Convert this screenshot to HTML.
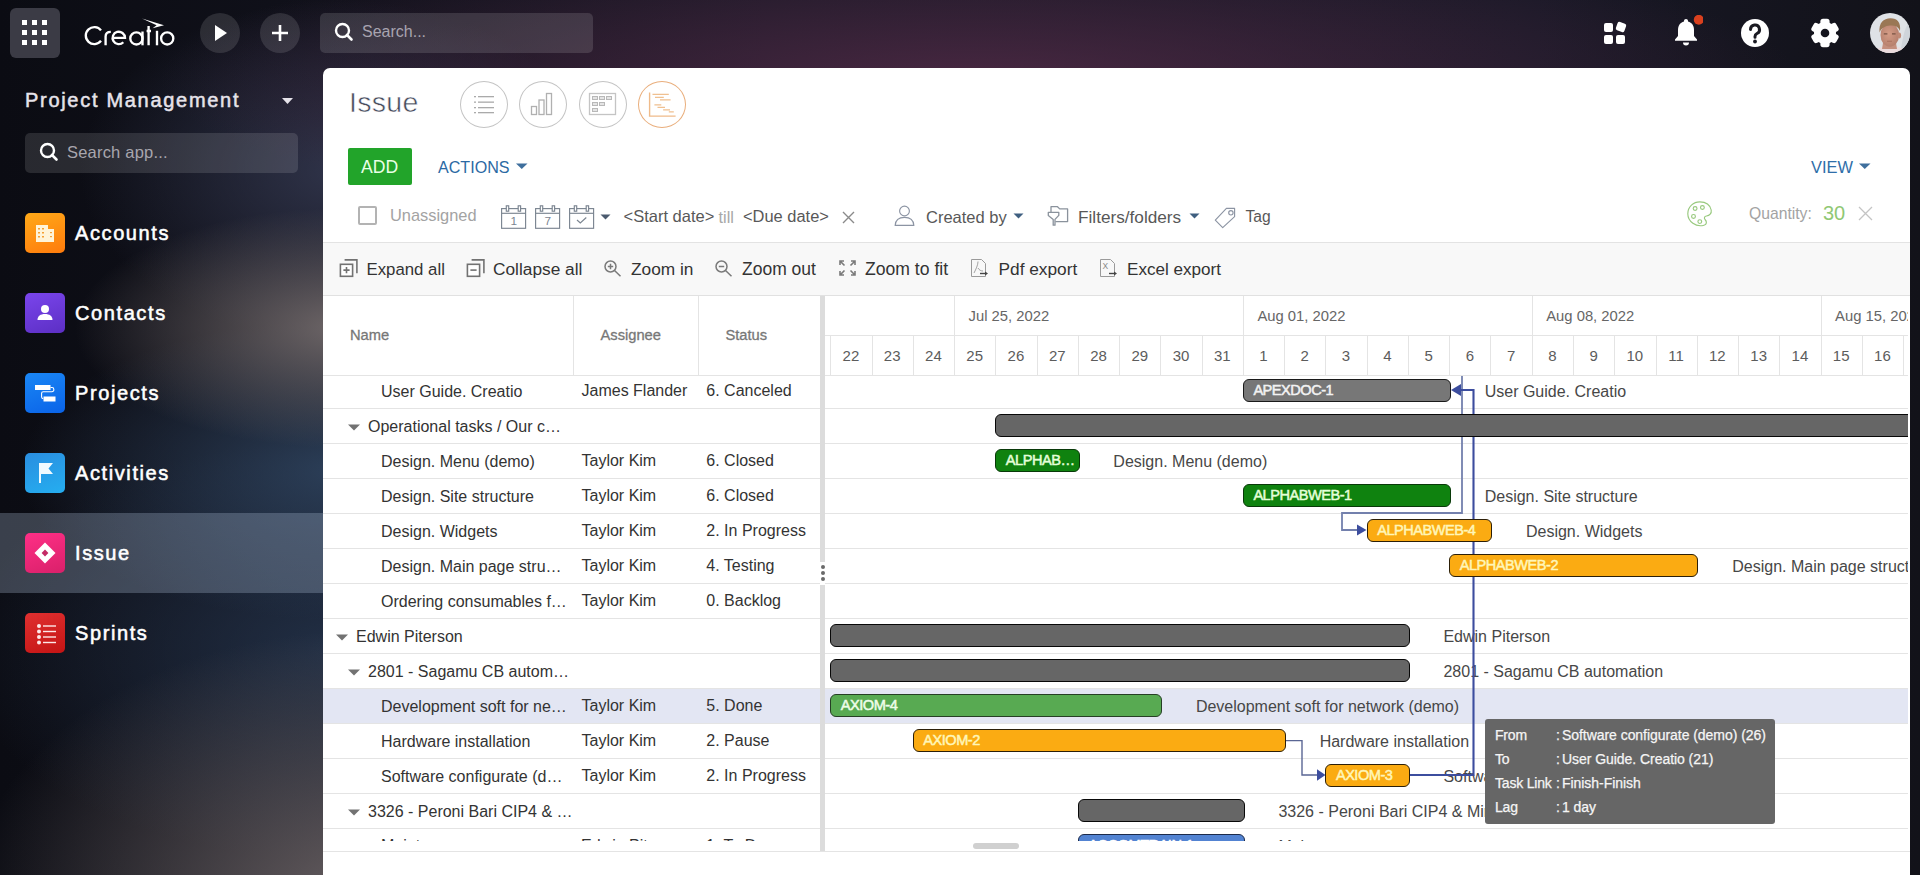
<!DOCTYPE html>
<html><head><meta charset="utf-8">
<style>
*{box-sizing:border-box;margin:0;padding:0}
html,body{width:1920px;height:875px;overflow:hidden}
body{position:relative;font-family:"Liberation Sans",sans-serif;color:#333;
background:
 radial-gradient(ellipse 270px 120px at 345px 328px, rgba(115,107,108,0.95), rgba(115,107,108,0) 100%),
 radial-gradient(ellipse 400px 270px at 370px 900px, rgba(108,100,102,0.95), rgba(108,100,102,0) 100%),
 radial-gradient(ellipse 820px 150px at 980px 80px, rgba(80,42,70,0.85), rgba(80,42,70,0) 100%),
 radial-gradient(ellipse 260px 170px at 340px 170px, rgba(55,60,85,0.8), rgba(55,60,85,0) 100%),
 radial-gradient(ellipse 320px 150px at 340px 470px, rgba(48,70,98,0.85), rgba(48,70,98,0) 100%),
 radial-gradient(ellipse 380px 210px at 340px 650px, rgba(38,55,80,0.8), rgba(38,55,80,0) 100%),
 linear-gradient(90deg,#0b0c13 0%,#171724 40%,#181826 80%,#121219 100%);
}
.abs{position:absolute}
.wt{color:#fff}
</style></head><body>

<!-- TOP BAR -->
<div class="abs" style="left:10px;top:8px;width:50px;height:50px;border-radius:6px;background:#3b3b45"></div>
<svg class="abs" style="left:22px;top:20px" width="26" height="26" viewBox="0 0 26 26" fill="#fff">
<rect x="0" y="0" width="5" height="5"/><rect x="10" y="0" width="5" height="5"/><rect x="20" y="0" width="5" height="5"/>
<rect x="0" y="10" width="5" height="5"/><rect x="10" y="10" width="5" height="5"/><rect x="20" y="10" width="5" height="5"/>
<rect x="0" y="20" width="5" height="5"/><rect x="10" y="20" width="5" height="5"/><rect x="20" y="20" width="5" height="5"/>
</svg>
<svg class="abs" style="left:80px;top:14px" width="100" height="38" viewBox="0 0 100 38"><g fill="none" stroke="#fff" stroke-width="2.35">
<path d="M21.00 16.37A8.5 8.5 0 1 0 21.00 26.83"/>
<path d="M25.6 31.3V22.5C25.6 19 27.4 17.9 30.8 17.9"/>
<path d="M32.5 23.9H45A6.2 6.2 0 1 0 43.3 28.2"/>
<circle cx="56.4" cy="24.4" r="6.1"/><path d="M62.5 17.5V31.3"/>
<path d="M68.6 12V31.3M66.6 17H71"/><path d="M77 16.8V31.3"/>
<circle cx="87.2" cy="24.4" r="6.1"/></g>
<path d="M62 4.6L84 11.3L72.6 14.2L76.6 11.2Z" fill="#fff"/></svg>

<div class="abs" style="left:200px;top:13px;width:40px;height:40px;border-radius:50%;background:rgba(255,255,255,0.12)"></div>
<svg class="abs" style="left:213px;top:24px" width="16" height="18"><path d="M2 1 L14 9 L2 17Z" fill="#fff"/></svg>
<div class="abs" style="left:260px;top:13px;width:40px;height:40px;border-radius:50%;background:rgba(255,255,255,0.12)"></div>
<svg class="abs" style="left:271px;top:24px" width="18" height="18"><path d="M9 1V17M1 9H17" stroke="#fff" stroke-width="2.6"/></svg>

<div class="abs" style="left:320px;top:13px;width:273px;height:40px;border-radius:5px;background:rgba(255,255,255,0.13)"></div>
<svg class="abs" style="left:334px;top:22px" width="20" height="20"><circle cx="8.5" cy="8.5" r="6.5" stroke="#fff" stroke-width="2.4" fill="none"/><path d="M13 13L17.5 17.5" stroke="#fff" stroke-width="2.6" stroke-linecap="round"/></svg>
<div class="abs" style="left:362px;top:22px;font-size:16px;color:#a8a4b0;line-height:20px">Search...</div>

<!-- right top icons -->
<svg class="abs" style="left:1603px;top:21px" width="26" height="26" fill="#fff">
<rect x="1" y="2" width="9" height="9" rx="2"/><rect x="1" y="14" width="9" height="9" rx="2"/><rect x="13" y="14" width="9" height="9" rx="2"/>
<rect x="13.5" y="1.5" width="9" height="9" rx="2" transform="rotate(20 18 6)"/>
</svg>
<svg class="abs" style="left:1671px;top:15px" width="32" height="34" fill="#fff">
<path d="M15 4c-1.2 0-2 .8-2 2v.6C9 7.6 7 11 7 15v6l-3 3.5v1.2h22v-1.2L23 21v-6c0-4-2-7.4-6-8.4V6c0-1.2-.8-2-2-2z"/>
<path d="M12 27.5h6a3 3 0 0 1-6 0z"/>
<circle cx="27.8" cy="4.8" r="5" fill="#d9401e"/>
</svg>
<svg class="abs" style="left:1740px;top:18px" width="30" height="30">
<circle cx="15" cy="15" r="14" fill="#fff"/>
<path d="M10.5 11.5a4.5 4.5 0 1 1 6.5 4c-1.4.8-2 1.5-2 3v.7" stroke="#1a1a22" stroke-width="3" fill="none" stroke-linecap="round"/>
<circle cx="15" cy="23.5" r="1.9" fill="#1a1a22"/>
</svg>
<svg class="abs" style="left:1808px;top:16px" width="34" height="34" viewBox="0 0 34 34"><g fill="#fff"><circle cx="17" cy="17" r="11"/><rect x="12.4" y="2.8000000000000007" width="9.2" height="8" rx="2.6" transform="rotate(0 17 17)"/><rect x="12.4" y="2.8000000000000007" width="9.2" height="8" rx="2.6" transform="rotate(60 17 17)"/><rect x="12.4" y="2.8000000000000007" width="9.2" height="8" rx="2.6" transform="rotate(120 17 17)"/><rect x="12.4" y="2.8000000000000007" width="9.2" height="8" rx="2.6" transform="rotate(180 17 17)"/><rect x="12.4" y="2.8000000000000007" width="9.2" height="8" rx="2.6" transform="rotate(240 17 17)"/><rect x="12.4" y="2.8000000000000007" width="9.2" height="8" rx="2.6" transform="rotate(300 17 17)"/></g><circle cx="17" cy="17" r="4.3" fill="#15151d"/></svg>
<svg class="abs" style="left:1870px;top:13px" width="40" height="40" viewBox="0 0 40 40"><defs><clipPath id="av"><circle cx="20" cy="20" r="20"/></clipPath><radialGradient id="fg" cx="0.45" cy="0.45" r="0.6"><stop offset="0" stop-color="#d49c86"/><stop offset="1" stop-color="#b47e6c"/></radialGradient></defs><g clip-path="url(#av)">
<rect width="40" height="40" fill="#dfe2e6"/><path d="M40 8C33 16 33 28 30 40H40Z" fill="#cfd4da"/>
<path d="M2 40C5 35 11 33.5 20 33.5S35 35 38 40Z" fill="#eadadc"/><path d="M13.5 27H25.5L27 36H12Z" fill="#c48f7e"/>
<ellipse cx="19.8" cy="22" rx="9.3" ry="11.8" fill="url(#fg)"/><ellipse cx="29.3" cy="22.5" rx="1.8" ry="3" fill="#c08a76"/>
<path d="M9.6 19.5C8.5 10 13.5 5.2 20.5 5.2S31 9.5 30 18C28.5 14 25 12.2 20 12.6C15 13 11.5 15 9.6 19.5Z" fill="#9a7755"/>
<path d="M13.8 20.8h3.6M22 20.8h3.6" stroke="#7a5446" stroke-width="1.3"/><path d="M17 28.2h5" stroke="#a9705f" stroke-width="1.1"/>
</g></svg>

<!-- SIDEBAR -->
<div class="abs" style="left:25px;top:88px;font-size:20px;font-weight:normal;color:#e6e3ea;letter-spacing:1.7px;line-height:24px;-webkit-text-stroke:0.5px #e6e3ea">Project Management</div>
<svg class="abs" style="left:282px;top:98px" width="12" height="8"><path d="M0 0H11L5.5 6Z" fill="#e6e3ea"/></svg>
<div class="abs" style="left:25px;top:133px;width:273px;height:40px;border-radius:5px;background:rgba(255,255,255,0.12)"></div>
<svg class="abs" style="left:39px;top:142px" width="20" height="20"><circle cx="8.5" cy="8.5" r="6.5" stroke="#fff" stroke-width="2.4" fill="none"/><path d="M13 13L17.5 17.5" stroke="#fff" stroke-width="2.6" stroke-linecap="round"/></svg>
<div class="abs" style="left:67px;top:142px;font-size:16.5px;color:#a8a6ae;line-height:20px;letter-spacing:0.2px">Search app...</div>

<div class="abs" style="left:0;top:513px;width:323px;height:80px;background:rgba(170,185,210,0.3)"></div>

<!-- menu -->
<div class="abs" style="left:25px;top:213px;width:40px;height:40px;border-radius:5px;background:linear-gradient(160deg,#ffa918,#ff7b0c)"></div>
<svg class="abs" style="left:25px;top:213px" width="40" height="40" fill="#fff4d8"><rect x="11" y="12" width="12" height="17"/><rect x="23" y="16" width="6" height="13"/>
<g fill="#f5a033"><rect x="13" y="15" width="2" height="1.5"/><rect x="17" y="15" width="2" height="1.5"/><rect x="13" y="19" width="2" height="1.5"/><rect x="17" y="19" width="2" height="1.5"/><rect x="13" y="23" width="2" height="1.5"/><rect x="17" y="23" width="2" height="1.5"/><rect x="25" y="19" width="2" height="1.2"/><rect x="25" y="23" width="2" height="1.2"/></g></svg>
<div class="abs wt" style="left:75px;top:223px;font-size:20px;font-weight:normal;line-height:20px;letter-spacing:1.6px;-webkit-text-stroke:0.55px #fff">Accounts</div>

<div class="abs" style="left:25px;top:293px;width:40px;height:40px;border-radius:5px;background:linear-gradient(160deg,#7a45ec,#5c2fc4)"></div>
<svg class="abs" style="left:25px;top:293px" width="40" height="40" fill="#fff"><circle cx="20" cy="16" r="4"/><path d="M12.5 27c0-4 3-6 7.5-6s7.5 2 7.5 6z"/></svg>
<div class="abs wt" style="left:75px;top:303px;font-size:20px;font-weight:normal;line-height:20px;letter-spacing:1.6px;-webkit-text-stroke:0.55px #fff">Contacts</div>

<div class="abs" style="left:25px;top:373px;width:40px;height:40px;border-radius:5px;background:linear-gradient(160deg,#1a87f5,#0a63e8)"></div>
<svg class="abs" style="left:25px;top:373px" width="40" height="40"><rect x="10" y="12" width="15.5" height="5" fill="#fff"/><rect x="18.5" y="23.5" width="12" height="5" fill="#fff"/><path d="M25.5 14.5h1.5a1.8 1.8 0 0 1 1.8 1.8v0.6a1.8 1.8 0 0 1 -1.8 1.8h-8.8a1.6 1.6 0 0 0 -1.6 1.6v3.7a1.6 1.6 0 0 0 1.6 1.6" stroke="#fff" stroke-width="1.1" fill="none"/></svg>
<div class="abs wt" style="left:75px;top:383px;font-size:20px;font-weight:normal;line-height:20px;letter-spacing:1.6px;-webkit-text-stroke:0.55px #fff">Projects</div>

<div class="abs" style="left:25px;top:453px;width:40px;height:40px;border-radius:5px;background:linear-gradient(160deg,#2a8ee0,#25aef0)"></div>
<svg class="abs" style="left:25px;top:453px" width="40" height="40"><path d="M14 10h14l-4.5 5.5L28 21H16v9h-2z" fill="#f0faff"/></svg>
<div class="abs wt" style="left:75px;top:463px;font-size:20px;font-weight:normal;line-height:20px;letter-spacing:1.6px;-webkit-text-stroke:0.55px #fff">Activities</div>

<div class="abs" style="left:25px;top:533px;width:40px;height:40px;border-radius:5px;background:linear-gradient(160deg,#ff2f86,#d9206a)"></div>
<svg class="abs" style="left:25px;top:533px" width="40" height="40"><path d="M20 9.5L30.5 20L20 30.5L9.5 20Z" fill="#fff"/><rect x="17.6" y="17.6" width="4.8" height="4.8" fill="#c42a66" transform="rotate(45 20 20)"/></svg>
<div class="abs wt" style="left:75px;top:543px;font-size:20px;font-weight:normal;line-height:20px;letter-spacing:1.6px;-webkit-text-stroke:0.55px #fff">Issue</div>

<div class="abs" style="left:25px;top:613px;width:40px;height:40px;border-radius:5px;background:linear-gradient(160deg,#e03030,#c41414)"></div>
<svg class="abs" style="left:25px;top:613px" width="40" height="40" fill="#fde8e8"><circle cx="14" cy="13" r="2"/><circle cx="14" cy="18.5" r="2"/><circle cx="14" cy="24" r="2"/><circle cx="14" cy="29.5" r="2"/>
<rect x="18" y="12.3" width="13" height="1.4"/><rect x="18" y="17.8" width="13" height="1.4"/><rect x="18" y="23.3" width="13" height="1.4"/><rect x="18" y="28.8" width="13" height="1.4"/></svg>
<div class="abs wt" style="left:75px;top:623px;font-size:20px;font-weight:normal;line-height:20px;letter-spacing:1.6px;-webkit-text-stroke:0.55px #fff">Sprints</div>


<div class="abs" style="left:323px;top:68px;width:1587px;height:807px;background:#fff;border-radius:7px 7px 0 0"></div>
<div class="abs" style="left:349px;top:84.12px;font-size:28.5px;line-height:36px;color:#464b5c;font-weight:normal;white-space:nowrap;letter-spacing:0.3px;-webkit-text-stroke:0.55px #fff">Issue</div>
<div class="abs" style="left:460px;top:81px;width:48px;height:47px;border:1px solid #c4c4c4;border-radius:50%"></div>
<div class="abs" style="left:519px;top:81px;width:48px;height:47px;border:1px solid #c4c4c4;border-radius:50%"></div>
<div class="abs" style="left:579px;top:81px;width:48px;height:47px;border:1px solid #c4c4c4;border-radius:50%"></div>
<div class="abs" style="left:638px;top:81px;width:48px;height:47px;border:1px solid #e9ae7c;border-radius:50%"></div>
<svg class="abs" style="left:472px;top:94px;" width="26" height="20" viewBox="0 0 26 20"><g fill="#aaa"><rect x="2" y="2" width="2" height="1.3"/><rect x="6" y="2" width="16" height="1.3"/><rect x="2" y="7.5" width="2" height="1.3"/><rect x="6" y="7.5" width="16" height="1.3"/><rect x="2" y="13" width="2" height="1.3"/><rect x="6" y="13" width="16" height="1.3"/><rect x="2" y="18" width="2" height="1.3"/><rect x="6" y="18" width="16" height="1.3"/></g></svg>
<svg class="abs" style="left:529px;top:91px;" width="28" height="26" viewBox="0 0 28 26"><g fill="none" stroke="#b0b0b0" stroke-width="1.3"><rect x="2.5" y="15.5" width="5" height="8"/><rect x="10" y="9" width="5" height="14.5"/><rect x="17.5" y="2.5" width="5" height="21"/></g></svg>
<svg class="abs" style="left:588px;top:92px;" width="30" height="26" viewBox="0 0 30 26"><g fill="none" stroke="#c4c4c4" stroke-width="1.3"><rect x="1.5" y="1.5" width="26" height="21"/></g><g fill="#e4e4e4" stroke="#b8b8b8" stroke-width="1"><rect x="4.5" y="4.5" width="5" height="3"/><rect x="11.5" y="4.5" width="5" height="3"/><rect x="18.5" y="4.5" width="5" height="3"/><rect x="4.5" y="10.5" width="5" height="3"/><rect x="11.5" y="10.5" width="5" height="3"/><rect x="4.5" y="16.5" width="5" height="3"/></g></svg>
<svg class="abs" style="left:647px;top:91px;" width="30" height="27" viewBox="0 0 30 27"><g fill="none" stroke="#efbb8a" stroke-width="1.4"><path d="M2.6 1.4V25.1H28.6"/></g><g stroke="#f0c090" stroke-width="1.3"><path d="M5.5 3.3H21.8M8 6.4H16.8M13 8.9H23.6M7.4 13.9H14.3M10.5 16.4H18M16.1 18.9H23M21.8 20.8H26.8"/></g></svg>
<div class="abs" style="left:348px;top:148px;width:64px;height:37px;background:#22a42a;border-radius:2px"></div>
<div class="abs" style="left:361px;top:155.70px;font-size:17.6px;line-height:22px;color:#e9ffe6;font-weight:normal;white-space:nowrap;">ADD</div>
<div class="abs" style="left:438px;top:156.92px;font-size:16.1px;line-height:20px;color:#2b69a3;font-weight:normal;white-space:nowrap;">ACTIONS</div>
<svg class="abs" style="left:515px;top:163px;" width="14" height="7" viewBox="0 0 14 7"><path d="M1 0.5H12.5L6.75 6Z" fill="#3f6f9d"/></svg>
<div class="abs" style="left:1811px;top:157.31px;font-size:16.4px;line-height:20px;color:#2f6ea9;font-weight:normal;white-space:nowrap;">VIEW</div>
<svg class="abs" style="left:1858px;top:163px;" width="14" height="7" viewBox="0 0 14 7"><path d="M1 0.5H12.5L6.75 6Z" fill="#3f6f9d"/></svg>
<div class="abs" style="left:358px;top:206px;width:19px;height:19px;border:2px solid #b3b3b3;border-radius:2px"></div>
<div class="abs" style="left:390px;top:204.81px;font-size:16.4px;line-height:20px;color:#a3a3a3;font-weight:normal;white-space:nowrap;">Unassigned</div>
<svg class="abs" style="left:501px;top:205px;" width="26" height="25" viewBox="0 0 26 25"><g fill="none" stroke="#7b8591" stroke-width="1.15"><rect x="0.6" y="3.6" width="24" height="19.7"/><path d="M0.6 8.3H24.6"/><rect x="5.3" y="0.8" width="2.4" height="5.4" fill="#fff"/><rect x="17.2" y="0.8" width="2.4" height="5.4" fill="#fff"/></g><text x="12.8" y="20" font-size="11.8" text-anchor="middle" fill="#7b8591" font-family="Liberation Sans">1</text></svg>
<svg class="abs" style="left:535px;top:205px;" width="26" height="25" viewBox="0 0 26 25"><g fill="none" stroke="#7b8591" stroke-width="1.15"><rect x="0.6" y="3.6" width="24" height="19.7"/><path d="M0.6 8.3H24.6"/><rect x="5.3" y="0.8" width="2.4" height="5.4" fill="#fff"/><rect x="17.2" y="0.8" width="2.4" height="5.4" fill="#fff"/></g><text x="12.8" y="20" font-size="11.8" text-anchor="middle" fill="#7b8591" font-family="Liberation Sans">7</text></svg>
<svg class="abs" style="left:569px;top:205px;" width="26" height="25" viewBox="0 0 26 25"><g fill="none" stroke="#7b8591" stroke-width="1.15"><rect x="0.6" y="3.6" width="24" height="19.7"/><path d="M0.6 8.3H24.6"/><rect x="5.3" y="0.8" width="2.4" height="5.4" fill="#fff"/><rect x="17.2" y="0.8" width="2.4" height="5.4" fill="#fff"/></g><path d="M8 15L11.3 18L17.3 12.5" stroke="#7b8591" stroke-width="1.15" fill="none"/></svg>
<svg class="abs" style="left:600px;top:214px;" width="11" height="7" viewBox="0 0 11 7"><path d="M0.5 0.5H10.5L5.5 5.5Z" fill="#4b5a6e"/></svg>
<div class="abs" style="left:623.5px;top:206.08px;font-size:16.5px;line-height:21px;color:#585858;font-weight:normal;white-space:nowrap;">&lt;Start date&gt;</div>
<div class="abs" style="left:718.5px;top:206.65px;font-size:16.3px;line-height:20px;color:#a8a8a8;font-weight:normal;white-space:nowrap;">till</div>
<div class="abs" style="left:743px;top:206.10px;font-size:16.45px;line-height:21px;color:#585858;font-weight:normal;white-space:nowrap;">&lt;Due date&gt;</div>
<svg class="abs" style="left:842px;top:211px;" width="13" height="13" viewBox="0 0 13 13"><path d="M1 1L12 12M12 1L1 12" stroke="#8a8a8a" stroke-width="1.4"/></svg>
<svg class="abs" style="left:894px;top:205px;" width="22" height="22" viewBox="0 0 22 22"><g fill="none" stroke="#8c94a3" stroke-width="1.15"><circle cx="10.5" cy="6" r="4.9"/><path d="M1.2 20.3C1.5 15 5 12.3 10.5 12.3S19.5 15 19.8 20.3Z"/></g></svg>
<div class="abs" style="left:926px;top:206.58px;font-size:16.5px;line-height:21px;color:#585858;font-weight:normal;white-space:nowrap;">Created by</div>
<svg class="abs" style="left:1013px;top:213px;" width="11" height="6" viewBox="0 0 11 6"><path d="M0.5 0.5H10.5L5.5 5.5Z" fill="#3f5f80"/></svg>
<svg class="abs" style="left:1047px;top:206px;" width="23" height="22" viewBox="0 0 23 22"><g fill="none" stroke="#8a929c" stroke-width="1.3" stroke-linejoin="round"><path d="M4 6V0.7H10.5L12.7 2.9H20.6V15.6H8.4"/><path d="M1.3 6.3H11.8V9.4L8 13.4V19.2H6.2V13.4L1.3 9.4Z"/></g></svg>
<div class="abs" style="left:1078px;top:205.84px;font-size:17.2px;line-height:22px;color:#585858;font-weight:normal;white-space:nowrap;">Filters/folders</div>
<svg class="abs" style="left:1189px;top:213px;" width="11" height="6" viewBox="0 0 11 6"><path d="M0.5 0.5H10.5L5.5 5.5Z" fill="#3f5f80"/></svg>
<svg class="abs" style="left:1214px;top:206px;" width="23" height="23" viewBox="0 0 23 23"><g fill="none" stroke="#8c94a3" stroke-width="1.15" stroke-linejoin="round"><path d="M12.4 2.4H20.6V10.6L8.7 21.6L1.3 14.2Z"/><circle cx="16.9" cy="6.8" r="2.2"/></g></svg>
<div class="abs" style="left:1245.5px;top:207.39px;font-size:15.6px;line-height:20px;color:#585858;font-weight:normal;white-space:nowrap;">Tag</div>
<svg class="abs" style="left:1686px;top:200px;" width="28" height="28" viewBox="0 0 28 28"><g fill="none" stroke="#98c97e" stroke-width="1.15"><path d="M18 25.2C10 27.5 1.8 21.5 1.8 13.7C1.8 6.5 7.5 1.8 13.8 1.8C19.5 1.8 24 4.5 25.2 10C25.8 13.5 23.5 15.8 20.5 16C18.5 16.2 17.8 18 19 19.5C21 21.5 21 24.5 18 25.2Z"/><circle cx="9.1" cy="8.5" r="1.9"/><circle cx="16.4" cy="7.5" r="1.9"/><circle cx="7.5" cy="16.4" r="1.9"/><circle cx="13.8" cy="21.6" r="1.9"/></g></svg>
<div class="abs" style="left:1749px;top:203.76px;font-size:15.7px;line-height:20px;color:#a3a3a3;font-weight:normal;white-space:nowrap;">Quantity:</div>
<div class="abs" style="left:1823px;top:200.77px;font-size:20px;line-height:25px;color:#90c874;font-weight:normal;white-space:nowrap;">30</div>
<svg class="abs" style="left:1858px;top:206px;" width="15" height="15" viewBox="0 0 15 15"><path d="M1 1L14 14M14 1L1 14" stroke="#c4c4c4" stroke-width="1.3"/></svg>
<div class="abs" style="left:323px;top:242px;width:1587px;height:1px;background:#e3e3e3"></div>
<div class="abs" style="left:323px;top:243px;width:1587px;height:52px;background:#f8f8f8"></div>
<div class="abs" style="left:323px;top:295px;width:1587px;height:1px;background:#e1e1e1"></div>
<svg class="abs" style="left:339px;top:259px;" width="20" height="19" viewBox="0 0 20 19"><g fill="none" stroke="#727272" stroke-width="1.6"><path d="M5.6 0.9H17.9V14.3"/><rect x="1.4" y="5.3" width="12.2" height="12" fill="#fff"/><path d="M7.5 8V14.2M4.4 11.1H10.6"/></g></svg>
<div class="abs" style="left:366.5px;top:258.68px;font-size:16.8px;line-height:21px;color:#333;font-weight:normal;white-space:nowrap;">Expand all</div>
<svg class="abs" style="left:466px;top:259px;" width="20" height="19" viewBox="0 0 20 19"><g fill="none" stroke="#727272" stroke-width="1.6"><path d="M5.6 0.9H17.9V14.3"/><rect x="1.4" y="5.3" width="12.2" height="12" fill="#fff"/><path d="M4.4 11.1H10.6"/></g></svg>
<div class="abs" style="left:493px;top:258.00px;font-size:17.3px;line-height:22px;color:#333;font-weight:normal;white-space:nowrap;">Collapse all</div>
<svg class="abs" style="left:604px;top:260px;" width="18" height="17" viewBox="0 0 18 17"><g fill="none" stroke="#7a7a7a" stroke-width="1.5"><circle cx="6.5" cy="6.5" r="5.5"/><path d="M10.5 10.5L16.5 16.3M6.5 3.8V9.2M3.8 6.5H9.2"/></g></svg>
<div class="abs" style="left:631px;top:258.00px;font-size:17.3px;line-height:22px;color:#333;font-weight:normal;white-space:nowrap;">Zoom in</div>
<svg class="abs" style="left:715px;top:260px;" width="18" height="17" viewBox="0 0 18 17"><g fill="none" stroke="#7a7a7a" stroke-width="1.5"><circle cx="6.5" cy="6.5" r="5.5"/><path d="M10.5 10.5L16.5 16.3M3.8 6.5H9.2"/></g></svg>
<div class="abs" style="left:742px;top:257.93px;font-size:17.5px;line-height:22px;color:#333;font-weight:normal;white-space:nowrap;">Zoom out</div>
<svg class="abs" style="left:839px;top:260px;" width="17" height="16" viewBox="0 0 17 16"><g fill="none" stroke="#7a7a7a" stroke-width="1.6"><path d="M1 5V1H5M1 1L5.5 5.5M16 5V1H12M16 1L11.5 5.5M1 11V15H5M1 15L5.5 10.5M16 11V15H12M16 15L11.5 10.5"/></g></svg>
<div class="abs" style="left:865px;top:257.90px;font-size:17.6px;line-height:22px;color:#333;font-weight:normal;white-space:nowrap;">Zoom to fit</div>
<svg class="abs" style="left:971px;top:259px;" width="18" height="19" viewBox="0 0 18 19"><g fill="none" stroke="#9a9a9a" stroke-width="1"><path d="M0.5 0.5H10.5L14.5 4.5V17.5H0.5Z"/></g><path d="M3 14C5 10 7 6 7 2.5M7 9C8 11 10 12 12 12" stroke="#9a9a9a" stroke-width="0.9" fill="none"/><path d="M9 14.5H15.5" stroke="#444" stroke-width="1.4"/><path d="M14 12.5L17 14.5L14 16.5Z" fill="#444"/></svg>
<div class="abs" style="left:998.5px;top:258.00px;font-size:17.3px;line-height:22px;color:#333;font-weight:normal;white-space:nowrap;">Pdf export</div>
<svg class="abs" style="left:1100px;top:259px;" width="18" height="19" viewBox="0 0 18 19"><g fill="none" stroke="#9a9a9a" stroke-width="1"><path d="M0.5 0.5H10.5L14.5 4.5V17.5H0.5Z"/></g><text x="2.5" y="10" font-size="8.5" fill="#888" font-family="Liberation Sans">X</text><path d="M9 14.5H15.5" stroke="#444" stroke-width="1.4"/><path d="M14 12.5L17 14.5L14 16.5Z" fill="#444"/></svg>
<div class="abs" style="left:1127px;top:258.57px;font-size:17.1px;line-height:21px;color:#333;font-weight:normal;white-space:nowrap;">Excel export</div>
<div class="abs" style="left:573px;top:296px;width:1px;height:79px;background:#e4e4e4"></div>
<div class="abs" style="left:698px;top:296px;width:1px;height:79px;background:#e4e4e4"></div>
<div class="abs" style="left:350px;top:326.10px;font-size:14.7px;line-height:18px;color:#777;font-weight:normal;white-space:nowrap;-webkit-text-stroke:0.3px #777">Name</div>
<div class="abs" style="left:600.5px;top:326.10px;font-size:14.7px;line-height:18px;color:#777;font-weight:normal;white-space:nowrap;-webkit-text-stroke:0.3px #777">Assignee</div>
<div class="abs" style="left:725.4px;top:326.10px;font-size:14.7px;line-height:18px;color:#777;font-weight:normal;white-space:nowrap;-webkit-text-stroke:0.3px #777">Status</div>
<div class="abs" style="left:323px;top:375px;width:497px;height:1px;background:#e4e4e4"></div>
<div class="abs" style="left:323px;top:688px;width:497px;height:35px;background:#e3e6f3"></div>
<div class="abs" style="left:825px;top:688px;width:1083px;height:35px;background:#e3e6f3"></div>
<div class="abs" style="left:381px;top:381.95px;font-size:16px;line-height:20px;color:#333;font-weight:normal;white-space:nowrap;">User Guide. Creatio</div>
<div class="abs" style="left:581.5px;top:380.65px;font-size:16px;line-height:20px;color:#333;font-weight:normal;white-space:nowrap;">James Flander</div>
<div class="abs" style="left:706.3px;top:380.65px;font-size:16px;line-height:20px;color:#333;font-weight:normal;white-space:nowrap;">6. Canceled</div>
<div class="abs" style="left:368px;top:416.95px;font-size:16px;line-height:20px;color:#333;font-weight:normal;white-space:nowrap;">Operational tasks / Our c…</div>
<svg class="abs" style="left:348px;top:423.5px;" width="13" height="7" viewBox="0 0 13 7"><path d="M0 0.5H12L6 6.5Z" fill="#727272"/></svg>
<div class="abs" style="left:381px;top:451.95px;font-size:16px;line-height:20px;color:#333;font-weight:normal;white-space:nowrap;">Design. Menu (demo)</div>
<div class="abs" style="left:581.5px;top:450.65px;font-size:16px;line-height:20px;color:#333;font-weight:normal;white-space:nowrap;">Taylor Kim</div>
<div class="abs" style="left:706.3px;top:450.65px;font-size:16px;line-height:20px;color:#333;font-weight:normal;white-space:nowrap;">6. Closed</div>
<div class="abs" style="left:381px;top:486.95px;font-size:16px;line-height:20px;color:#333;font-weight:normal;white-space:nowrap;">Design. Site structure</div>
<div class="abs" style="left:581.5px;top:485.65px;font-size:16px;line-height:20px;color:#333;font-weight:normal;white-space:nowrap;">Taylor Kim</div>
<div class="abs" style="left:706.3px;top:485.65px;font-size:16px;line-height:20px;color:#333;font-weight:normal;white-space:nowrap;">6. Closed</div>
<div class="abs" style="left:381px;top:521.95px;font-size:16px;line-height:20px;color:#333;font-weight:normal;white-space:nowrap;">Design. Widgets</div>
<div class="abs" style="left:581.5px;top:520.65px;font-size:16px;line-height:20px;color:#333;font-weight:normal;white-space:nowrap;">Taylor Kim</div>
<div class="abs" style="left:706.3px;top:520.65px;font-size:16px;line-height:20px;color:#333;font-weight:normal;white-space:nowrap;">2. In Progress</div>
<div class="abs" style="left:381px;top:556.95px;font-size:16px;line-height:20px;color:#333;font-weight:normal;white-space:nowrap;">Design. Main page stru…</div>
<div class="abs" style="left:581.5px;top:555.65px;font-size:16px;line-height:20px;color:#333;font-weight:normal;white-space:nowrap;">Taylor Kim</div>
<div class="abs" style="left:706.3px;top:555.65px;font-size:16px;line-height:20px;color:#333;font-weight:normal;white-space:nowrap;">4. Testing</div>
<div class="abs" style="left:381px;top:591.95px;font-size:16px;line-height:20px;color:#333;font-weight:normal;white-space:nowrap;">Ordering consumables f…</div>
<div class="abs" style="left:581.5px;top:590.65px;font-size:16px;line-height:20px;color:#333;font-weight:normal;white-space:nowrap;">Taylor Kim</div>
<div class="abs" style="left:706.3px;top:590.65px;font-size:16px;line-height:20px;color:#333;font-weight:normal;white-space:nowrap;">0. Backlog</div>
<div class="abs" style="left:356px;top:626.95px;font-size:16px;line-height:20px;color:#333;font-weight:normal;white-space:nowrap;">Edwin Piterson</div>
<svg class="abs" style="left:336px;top:633.5px;" width="13" height="7" viewBox="0 0 13 7"><path d="M0 0.5H12L6 6.5Z" fill="#727272"/></svg>
<div class="abs" style="left:368px;top:661.95px;font-size:16px;line-height:20px;color:#333;font-weight:normal;white-space:nowrap;">2801 - Sagamu CB autom…</div>
<svg class="abs" style="left:348px;top:668.5px;" width="13" height="7" viewBox="0 0 13 7"><path d="M0 0.5H12L6 6.5Z" fill="#727272"/></svg>
<div class="abs" style="left:381px;top:696.95px;font-size:16px;line-height:20px;color:#333;font-weight:normal;white-space:nowrap;">Development soft for ne…</div>
<div class="abs" style="left:581.5px;top:695.65px;font-size:16px;line-height:20px;color:#333;font-weight:normal;white-space:nowrap;">Taylor Kim</div>
<div class="abs" style="left:706.3px;top:695.65px;font-size:16px;line-height:20px;color:#333;font-weight:normal;white-space:nowrap;">5. Done</div>
<div class="abs" style="left:381px;top:731.95px;font-size:16px;line-height:20px;color:#333;font-weight:normal;white-space:nowrap;">Hardware installation</div>
<div class="abs" style="left:581.5px;top:730.65px;font-size:16px;line-height:20px;color:#333;font-weight:normal;white-space:nowrap;">Taylor Kim</div>
<div class="abs" style="left:706.3px;top:730.65px;font-size:16px;line-height:20px;color:#333;font-weight:normal;white-space:nowrap;">2. Pause</div>
<div class="abs" style="left:381px;top:766.95px;font-size:16px;line-height:20px;color:#333;font-weight:normal;white-space:nowrap;">Software configurate (d…</div>
<div class="abs" style="left:581.5px;top:765.65px;font-size:16px;line-height:20px;color:#333;font-weight:normal;white-space:nowrap;">Taylor Kim</div>
<div class="abs" style="left:706.3px;top:765.65px;font-size:16px;line-height:20px;color:#333;font-weight:normal;white-space:nowrap;">2. In Progress</div>
<div class="abs" style="left:368px;top:801.95px;font-size:16px;line-height:20px;color:#333;font-weight:normal;white-space:nowrap;">3326 - Peroni Bari CIP4 &amp; …</div>
<svg class="abs" style="left:348px;top:808.5px;" width="13" height="7" viewBox="0 0 13 7"><path d="M0 0.5H12L6 6.5Z" fill="#727272"/></svg>
<div class="abs" style="left:323px;top:828px;width:497px;height:13px;overflow:hidden">
<div class="abs" style="left:58px;top:7.85px;font-size:16px;line-height:20px;color:#333;white-space:nowrap">Maintenance</div>
<div class="abs" style="left:258px;top:7.85px;font-size:16px;line-height:20px;color:#333;white-space:nowrap">Edwin Piterson</div>
<div class="abs" style="left:383px;top:7.85px;font-size:16px;line-height:20px;color:#333;white-space:nowrap">1. To Do</div>
</div>
<div class="abs" style="left:323px;top:408px;width:497px;height:1px;background:#e4e4e4"></div>
<div class="abs" style="left:323px;top:443px;width:497px;height:1px;background:#e4e4e4"></div>
<div class="abs" style="left:323px;top:478px;width:497px;height:1px;background:#e4e4e4"></div>
<div class="abs" style="left:323px;top:513px;width:497px;height:1px;background:#e4e4e4"></div>
<div class="abs" style="left:323px;top:548px;width:497px;height:1px;background:#e4e4e4"></div>
<div class="abs" style="left:323px;top:583px;width:497px;height:1px;background:#e4e4e4"></div>
<div class="abs" style="left:323px;top:618px;width:497px;height:1px;background:#e4e4e4"></div>
<div class="abs" style="left:323px;top:653px;width:497px;height:1px;background:#e4e4e4"></div>
<div class="abs" style="left:323px;top:688px;width:497px;height:1px;background:#e4e4e4"></div>
<div class="abs" style="left:323px;top:723px;width:497px;height:1px;background:#e4e4e4"></div>
<div class="abs" style="left:323px;top:758px;width:497px;height:1px;background:#e4e4e4"></div>
<div class="abs" style="left:323px;top:793px;width:497px;height:1px;background:#e4e4e4"></div>
<div class="abs" style="left:323px;top:828px;width:497px;height:1px;background:#e4e4e4"></div>
<div class="abs" style="left:323px;top:851px;width:1587px;height:1px;background:#e4e4e4"></div>
<div class="abs" style="left:820px;top:296px;width:5px;height:266px;background:#dcdcdc"></div>
<div class="abs" style="left:820px;top:585px;width:5px;height:266px;background:#dcdcdc"></div>
<div class="abs" style="left:820.9px;top:564.6px;width:4px;height:4px;background:#6a6a6a;border-radius:50%"></div>
<div class="abs" style="left:820.9px;top:571px;width:4px;height:4px;background:#6a6a6a;border-radius:50%"></div>
<div class="abs" style="left:820.9px;top:577.4px;width:4px;height:4px;background:#6a6a6a;border-radius:50%"></div>
<div class="abs" style="left:973px;top:843px;width:46px;height:6px;background:#d0d0d0;border-radius:3px"></div>
<div class="abs" style="left:825px;top:296px;width:1083px;height:545px;overflow:hidden">
<div class="abs" style="left:0.00px;top:39.00px;width:1083.00px;height:1.00px;background:#e4e4e4"></div>
<div class="abs" style="left:0.00px;top:79.00px;width:1083.00px;height:1.00px;background:#e4e4e4"></div>
<div class="abs" style="left:-35.96px;top:39.00px;width:1.00px;height:40.00px;background:#e4e4e4"></div>
<div class="abs" style="left:5.30px;top:39.00px;width:1.00px;height:40.00px;background:#e4e4e4"></div>
<div class="abs" style="left:5.30px;top:49.80px;width:41.26px;text-align:center;font-size:15px;line-height:20px;color:#5c5c5c">22</div>
<div class="abs" style="left:46.56px;top:39.00px;width:1.00px;height:40.00px;background:#e4e4e4"></div>
<div class="abs" style="left:46.56px;top:49.80px;width:41.26px;text-align:center;font-size:15px;line-height:20px;color:#5c5c5c">23</div>
<div class="abs" style="left:87.82px;top:39.00px;width:1.00px;height:40.00px;background:#e4e4e4"></div>
<div class="abs" style="left:87.82px;top:49.80px;width:41.26px;text-align:center;font-size:15px;line-height:20px;color:#5c5c5c">24</div>
<div class="abs" style="left:129.08px;top:39.00px;width:1.00px;height:40.00px;background:#e4e4e4"></div>
<div class="abs" style="left:129.08px;top:49.80px;width:41.26px;text-align:center;font-size:15px;line-height:20px;color:#5c5c5c">25</div>
<div class="abs" style="left:170.34px;top:39.00px;width:1.00px;height:40.00px;background:#e4e4e4"></div>
<div class="abs" style="left:170.34px;top:49.80px;width:41.26px;text-align:center;font-size:15px;line-height:20px;color:#5c5c5c">26</div>
<div class="abs" style="left:211.60px;top:39.00px;width:1.00px;height:40.00px;background:#e4e4e4"></div>
<div class="abs" style="left:211.60px;top:49.80px;width:41.26px;text-align:center;font-size:15px;line-height:20px;color:#5c5c5c">27</div>
<div class="abs" style="left:252.86px;top:39.00px;width:1.00px;height:40.00px;background:#e4e4e4"></div>
<div class="abs" style="left:252.86px;top:49.80px;width:41.26px;text-align:center;font-size:15px;line-height:20px;color:#5c5c5c">28</div>
<div class="abs" style="left:294.12px;top:39.00px;width:1.00px;height:40.00px;background:#e4e4e4"></div>
<div class="abs" style="left:294.12px;top:49.80px;width:41.26px;text-align:center;font-size:15px;line-height:20px;color:#5c5c5c">29</div>
<div class="abs" style="left:335.38px;top:39.00px;width:1.00px;height:40.00px;background:#e4e4e4"></div>
<div class="abs" style="left:335.38px;top:49.80px;width:41.26px;text-align:center;font-size:15px;line-height:20px;color:#5c5c5c">30</div>
<div class="abs" style="left:376.64px;top:39.00px;width:1.00px;height:40.00px;background:#e4e4e4"></div>
<div class="abs" style="left:376.64px;top:49.80px;width:41.26px;text-align:center;font-size:15px;line-height:20px;color:#5c5c5c">31</div>
<div class="abs" style="left:417.90px;top:39.00px;width:1.00px;height:40.00px;background:#e4e4e4"></div>
<div class="abs" style="left:417.90px;top:49.80px;width:41.26px;text-align:center;font-size:15px;line-height:20px;color:#5c5c5c">1</div>
<div class="abs" style="left:459.16px;top:39.00px;width:1.00px;height:40.00px;background:#e4e4e4"></div>
<div class="abs" style="left:459.16px;top:49.80px;width:41.26px;text-align:center;font-size:15px;line-height:20px;color:#5c5c5c">2</div>
<div class="abs" style="left:500.42px;top:39.00px;width:1.00px;height:40.00px;background:#e4e4e4"></div>
<div class="abs" style="left:500.42px;top:49.80px;width:41.26px;text-align:center;font-size:15px;line-height:20px;color:#5c5c5c">3</div>
<div class="abs" style="left:541.68px;top:39.00px;width:1.00px;height:40.00px;background:#e4e4e4"></div>
<div class="abs" style="left:541.68px;top:49.80px;width:41.26px;text-align:center;font-size:15px;line-height:20px;color:#5c5c5c">4</div>
<div class="abs" style="left:582.94px;top:39.00px;width:1.00px;height:40.00px;background:#e4e4e4"></div>
<div class="abs" style="left:582.94px;top:49.80px;width:41.26px;text-align:center;font-size:15px;line-height:20px;color:#5c5c5c">5</div>
<div class="abs" style="left:624.20px;top:39.00px;width:1.00px;height:40.00px;background:#e4e4e4"></div>
<div class="abs" style="left:624.20px;top:49.80px;width:41.26px;text-align:center;font-size:15px;line-height:20px;color:#5c5c5c">6</div>
<div class="abs" style="left:665.46px;top:39.00px;width:1.00px;height:40.00px;background:#e4e4e4"></div>
<div class="abs" style="left:665.46px;top:49.80px;width:41.26px;text-align:center;font-size:15px;line-height:20px;color:#5c5c5c">7</div>
<div class="abs" style="left:706.72px;top:39.00px;width:1.00px;height:40.00px;background:#e4e4e4"></div>
<div class="abs" style="left:706.72px;top:49.80px;width:41.26px;text-align:center;font-size:15px;line-height:20px;color:#5c5c5c">8</div>
<div class="abs" style="left:747.98px;top:39.00px;width:1.00px;height:40.00px;background:#e4e4e4"></div>
<div class="abs" style="left:747.98px;top:49.80px;width:41.26px;text-align:center;font-size:15px;line-height:20px;color:#5c5c5c">9</div>
<div class="abs" style="left:789.24px;top:39.00px;width:1.00px;height:40.00px;background:#e4e4e4"></div>
<div class="abs" style="left:789.24px;top:49.80px;width:41.26px;text-align:center;font-size:15px;line-height:20px;color:#5c5c5c">10</div>
<div class="abs" style="left:830.50px;top:39.00px;width:1.00px;height:40.00px;background:#e4e4e4"></div>
<div class="abs" style="left:830.50px;top:49.80px;width:41.26px;text-align:center;font-size:15px;line-height:20px;color:#5c5c5c">11</div>
<div class="abs" style="left:871.76px;top:39.00px;width:1.00px;height:40.00px;background:#e4e4e4"></div>
<div class="abs" style="left:871.76px;top:49.80px;width:41.26px;text-align:center;font-size:15px;line-height:20px;color:#5c5c5c">12</div>
<div class="abs" style="left:913.02px;top:39.00px;width:1.00px;height:40.00px;background:#e4e4e4"></div>
<div class="abs" style="left:913.02px;top:49.80px;width:41.26px;text-align:center;font-size:15px;line-height:20px;color:#5c5c5c">13</div>
<div class="abs" style="left:954.28px;top:39.00px;width:1.00px;height:40.00px;background:#e4e4e4"></div>
<div class="abs" style="left:954.28px;top:49.80px;width:41.26px;text-align:center;font-size:15px;line-height:20px;color:#5c5c5c">14</div>
<div class="abs" style="left:995.54px;top:39.00px;width:1.00px;height:40.00px;background:#e4e4e4"></div>
<div class="abs" style="left:995.54px;top:49.80px;width:41.26px;text-align:center;font-size:15px;line-height:20px;color:#5c5c5c">15</div>
<div class="abs" style="left:1036.80px;top:39.00px;width:1.00px;height:40.00px;background:#e4e4e4"></div>
<div class="abs" style="left:1036.80px;top:49.80px;width:41.26px;text-align:center;font-size:15px;line-height:20px;color:#5c5c5c">16</div>
<div class="abs" style="left:1078.06px;top:39.00px;width:1.00px;height:40.00px;background:#e4e4e4"></div>
<div class="abs" style="left:1078.06px;top:49.80px;width:41.26px;text-align:center;font-size:15px;line-height:20px;color:#5c5c5c">17</div>
<div class="abs" style="left:1119.32px;top:39.00px;width:1.00px;height:40.00px;background:#e4e4e4"></div>
<div class="abs" style="left:129.08px;top:0.00px;width:1.00px;height:39.00px;background:#e4e4e4"></div>
<div class="abs" style="left:143.58px;top:9.67px;font-size:14.8px;line-height:20px;color:#666;font-weight:normal;white-space:nowrap;">Jul 25, 2022</div>
<div class="abs" style="left:417.90px;top:0.00px;width:1.00px;height:39.00px;background:#e4e4e4"></div>
<div class="abs" style="left:432.40px;top:9.67px;font-size:14.8px;line-height:20px;color:#666;font-weight:normal;white-space:nowrap;">Aug 01, 2022</div>
<div class="abs" style="left:706.72px;top:0.00px;width:1.00px;height:39.00px;background:#e4e4e4"></div>
<div class="abs" style="left:721.22px;top:9.67px;font-size:14.8px;line-height:20px;color:#666;font-weight:normal;white-space:nowrap;">Aug 08, 2022</div>
<div class="abs" style="left:995.54px;top:0.00px;width:1.00px;height:39.00px;background:#e4e4e4"></div>
<div class="abs" style="left:1010.04px;top:9.67px;font-size:14.8px;line-height:20px;color:#666;font-weight:normal;white-space:nowrap;">Aug 15, 2022</div>
<div class="abs" style="left:0.00px;top:112.00px;width:1083.00px;height:1.00px;background:#e4e4e4"></div>
<div class="abs" style="left:0.00px;top:147.00px;width:1083.00px;height:1.00px;background:#e4e4e4"></div>
<div class="abs" style="left:0.00px;top:182.00px;width:1083.00px;height:1.00px;background:#e4e4e4"></div>
<div class="abs" style="left:0.00px;top:217.00px;width:1083.00px;height:1.00px;background:#e4e4e4"></div>
<div class="abs" style="left:0.00px;top:252.00px;width:1083.00px;height:1.00px;background:#e4e4e4"></div>
<div class="abs" style="left:0.00px;top:287.00px;width:1083.00px;height:1.00px;background:#e4e4e4"></div>
<div class="abs" style="left:0.00px;top:322.00px;width:1083.00px;height:1.00px;background:#e4e4e4"></div>
<div class="abs" style="left:0.00px;top:357.00px;width:1083.00px;height:1.00px;background:#e4e4e4"></div>
<div class="abs" style="left:0.00px;top:392.00px;width:1083.00px;height:1.00px;background:#e4e4e4"></div>
<div class="abs" style="left:0.00px;top:427.00px;width:1083.00px;height:1.00px;background:#e4e4e4"></div>
<div class="abs" style="left:0.00px;top:462.00px;width:1083.00px;height:1.00px;background:#e4e4e4"></div>
<div class="abs" style="left:0.00px;top:497.00px;width:1083.00px;height:1.00px;background:#e4e4e4"></div>
<div class="abs" style="left:0.00px;top:532.00px;width:1083.00px;height:1.00px;background:#e4e4e4"></div>
<div class="abs" style="left:659.70px;top:85.65px;font-size:16px;line-height:20px;color:#474747;font-weight:normal;white-space:nowrap;">User Guide. Creatio</div>
<div class="abs" style="left:288.36px;top:155.65px;font-size:16px;line-height:20px;color:#474747;font-weight:normal;white-space:nowrap;">Design. Menu (demo)</div>
<div class="abs" style="left:659.70px;top:190.65px;font-size:16px;line-height:20px;color:#474747;font-weight:normal;white-space:nowrap;">Design. Site structure</div>
<div class="abs" style="left:700.96px;top:225.65px;font-size:16px;line-height:20px;color:#474747;font-weight:normal;white-space:nowrap;">Design. Widgets</div>
<div class="abs" style="left:907.26px;top:260.65px;font-size:16px;line-height:20px;color:#474747;font-weight:normal;white-space:nowrap;">Design. Main page structure</div>
<div class="abs" style="left:618.44px;top:330.65px;font-size:16px;line-height:20px;color:#474747;font-weight:normal;white-space:nowrap;">Edwin Piterson</div>
<div class="abs" style="left:618.44px;top:365.65px;font-size:16px;line-height:20px;color:#474747;font-weight:normal;white-space:nowrap;">2801 - Sagamu CB automation</div>
<div class="abs" style="left:370.88px;top:400.65px;font-size:16px;line-height:20px;color:#474747;font-weight:normal;white-space:nowrap;">Development soft for network (demo)</div>
<div class="abs" style="left:494.66px;top:435.65px;font-size:16px;line-height:20px;color:#474747;font-weight:normal;white-space:nowrap;">Hardware installation</div>
<div class="abs" style="left:618.44px;top:470.65px;font-size:16px;line-height:20px;color:#474747;font-weight:normal;white-space:nowrap;">Software configurate (demo)</div>
<div class="abs" style="left:453.40px;top:505.65px;font-size:16px;line-height:20px;color:#474747;font-weight:normal;white-space:nowrap;">3326 - Peroni Bari CIP4 &amp; Mini</div>
<div class="abs" style="left:453.40px;top:540.65px;font-size:16px;line-height:20px;color:#474747;font-weight:normal;white-space:nowrap;">Maintenance</div>
<svg class="abs" style="left:0;top:0" width="1083" height="545"><path d="M637.0 80.0 L637.0 217.0 L517.0 217.0 L517.0 234.0 L533.0 234.0" stroke="#7380ad" stroke-width="1.8" fill="none"/><path d="M532.0 228.5 L541.5 234.0 L532.0 239.5Z" fill="#3c4d9e"/><path d="M584.0 479.0 L648.5 479.0 L648.5 94.0 L634.0 94.0" stroke="#3c4d9e" stroke-width="2.1" fill="none"/><path d="M636.0 88.0 L626.0 94.0 L636.0 100.0Z" fill="#3c4d9e"/><path d="M461.0 444.6 L477.0 444.6 L477.0 479.0 L492.0 479.0" stroke="#5a6694" stroke-width="1.4" fill="none"/><path d="M492.0 473.3 L500.5 479.0 L492.0 484.7Z" fill="#3c4d9e"/></svg>
<div class="abs" style="left:417.90px;top:83.00px;width:208.10px;height:23.00px;background:#777;border:1.5px solid #1a1a1a;border-radius:6px;box-sizing:border-box;overflow:hidden"></div>
<div class="abs" style="left:428.40px;top:84.14px;font-size:14.6px;line-height:20px;color:#f2f2f2;font-weight:normal;white-space:nowrap;letter-spacing:-0.5px;-webkit-text-stroke:0.5px #f2f2f2">APEXDOC-1</div>
<div class="abs" style="left:170.34px;top:118.00px;width:1485.36px;height:23.00px;background:#666;border:1.5px solid #080808;border-radius:6px;box-sizing:border-box;overflow:hidden"></div>
<div class="abs" style="left:170.34px;top:153.00px;width:84.66px;height:23.00px;background:#0f820f;border:1.5px solid #093909;border-radius:6px;box-sizing:border-box;overflow:hidden"></div>
<div class="abs" style="left:180.84px;top:154.14px;font-size:14.6px;line-height:20px;color:#e4ffd8;font-weight:normal;white-space:nowrap;letter-spacing:-0.5px;-webkit-text-stroke:0.5px #e4ffd8">ALPHAB…</div>
<div class="abs" style="left:417.90px;top:188.00px;width:208.10px;height:23.00px;background:#0f820f;border:1.5px solid #093909;border-radius:6px;box-sizing:border-box;overflow:hidden"></div>
<div class="abs" style="left:428.40px;top:189.14px;font-size:14.6px;line-height:20px;color:#e4ffd8;font-weight:normal;white-space:nowrap;letter-spacing:-0.5px;-webkit-text-stroke:0.5px #e4ffd8">ALPHABWEB-1</div>
<div class="abs" style="left:541.68px;top:223.00px;width:125.32px;height:23.00px;background:#fbab12;border:1.5px solid #2c1f08;border-radius:6px;box-sizing:border-box;overflow:hidden"></div>
<div class="abs" style="left:552.18px;top:224.14px;font-size:14.6px;line-height:20px;color:#fff6b8;font-weight:normal;white-space:nowrap;letter-spacing:-0.5px;-webkit-text-stroke:0.5px #fff6b8">ALPHABWEB-4</div>
<div class="abs" style="left:624.20px;top:258.00px;width:248.80px;height:23.00px;background:#fbab12;border:1.5px solid #2c1f08;border-radius:6px;box-sizing:border-box;overflow:hidden"></div>
<div class="abs" style="left:634.70px;top:259.14px;font-size:14.6px;line-height:20px;color:#fff6b8;font-weight:normal;white-space:nowrap;letter-spacing:-0.5px;-webkit-text-stroke:0.5px #fff6b8">ALPHABWEB-2</div>
<div class="abs" style="left:5.30px;top:328.00px;width:579.70px;height:23.00px;background:#666;border:1.5px solid #080808;border-radius:6px;box-sizing:border-box;overflow:hidden"></div>
<div class="abs" style="left:5.30px;top:363.00px;width:579.70px;height:23.00px;background:#666;border:1.5px solid #080808;border-radius:6px;box-sizing:border-box;overflow:hidden"></div>
<div class="abs" style="left:5.30px;top:398.00px;width:331.70px;height:23.00px;background:#58aa52;border:1.5px solid #263f25;border-radius:6px;box-sizing:border-box;overflow:hidden"></div>
<div class="abs" style="left:15.80px;top:399.14px;font-size:14.6px;line-height:20px;color:#eefde8;font-weight:normal;white-space:nowrap;letter-spacing:-0.5px;-webkit-text-stroke:0.5px #eefde8">AXIOM-4</div>
<div class="abs" style="left:87.82px;top:433.00px;width:373.18px;height:23.00px;background:#fbab12;border:1.5px solid #2c1f08;border-radius:6px;box-sizing:border-box;overflow:hidden"></div>
<div class="abs" style="left:98.32px;top:434.14px;font-size:14.6px;line-height:20px;color:#fff6b8;font-weight:normal;white-space:nowrap;letter-spacing:-0.5px;-webkit-text-stroke:0.5px #fff6b8">AXIOM-2</div>
<div class="abs" style="left:500.42px;top:468.00px;width:84.58px;height:23.00px;background:#fbab12;border:1.5px solid #2c1f08;border-radius:6px;box-sizing:border-box;overflow:hidden"></div>
<div class="abs" style="left:510.92px;top:469.14px;font-size:14.6px;line-height:20px;color:#fff6b8;font-weight:normal;white-space:nowrap;letter-spacing:-0.5px;-webkit-text-stroke:0.5px #fff6b8">AXIOM-3</div>
<div class="abs" style="left:252.86px;top:503.00px;width:167.14px;height:23.00px;background:#666;border:1.5px solid #080808;border-radius:6px;box-sizing:border-box;overflow:hidden"></div>
<div class="abs" style="left:252.86px;top:538.00px;width:167.14px;height:23.00px;background:#5283d2;border:1.5px solid #1c2a4a;border-radius:6px;box-sizing:border-box;overflow:hidden"></div>
<div class="abs" style="left:263.36px;top:539.14px;font-size:14.6px;line-height:20px;color:#fff;font-weight:normal;white-space:nowrap;letter-spacing:-0.5px;-webkit-text-stroke:0.5px #fff">ACCOMTRAIN-1</div>
</div>
<div class="abs" style="left:1485px;top:719px;width:290px;height:105px;background:#666;border-radius:3px"></div>
<div class="abs" style="left:1495px;top:726.05px;font-size:14px;line-height:18px;color:#f5f5f5;font-weight:normal;white-space:nowrap;letter-spacing:-0.2px;-webkit-text-stroke:0.25px #f5f5f5">From</div>
<div class="abs" style="left:1556px;top:726.05px;font-size:14px;line-height:18px;color:#f5f5f5;font-weight:normal;white-space:nowrap;-webkit-text-stroke:0.25px #f5f5f5">:</div>
<div class="abs" style="left:1562px;top:726.05px;font-size:14px;line-height:18px;color:#f5f5f5;font-weight:normal;white-space:nowrap;letter-spacing:-0.05px;-webkit-text-stroke:0.25px #f5f5f5">Software configurate (demo) (26)</div>
<div class="abs" style="left:1495px;top:749.90px;font-size:14px;line-height:18px;color:#f5f5f5;font-weight:normal;white-space:nowrap;letter-spacing:-0.2px;-webkit-text-stroke:0.25px #f5f5f5">To</div>
<div class="abs" style="left:1556px;top:749.90px;font-size:14px;line-height:18px;color:#f5f5f5;font-weight:normal;white-space:nowrap;-webkit-text-stroke:0.25px #f5f5f5">:</div>
<div class="abs" style="left:1562px;top:749.90px;font-size:14px;line-height:18px;color:#f5f5f5;font-weight:normal;white-space:nowrap;letter-spacing:-0.05px;-webkit-text-stroke:0.25px #f5f5f5">User Guide. Creatio (21)</div>
<div class="abs" style="left:1495px;top:773.75px;font-size:14px;line-height:18px;color:#f5f5f5;font-weight:normal;white-space:nowrap;letter-spacing:-0.2px;-webkit-text-stroke:0.25px #f5f5f5">Task Link</div>
<div class="abs" style="left:1556px;top:773.75px;font-size:14px;line-height:18px;color:#f5f5f5;font-weight:normal;white-space:nowrap;-webkit-text-stroke:0.25px #f5f5f5">:</div>
<div class="abs" style="left:1562px;top:773.75px;font-size:14px;line-height:18px;color:#f5f5f5;font-weight:normal;white-space:nowrap;letter-spacing:-0.05px;-webkit-text-stroke:0.25px #f5f5f5">Finish-Finish</div>
<div class="abs" style="left:1495px;top:797.60px;font-size:14px;line-height:18px;color:#f5f5f5;font-weight:normal;white-space:nowrap;letter-spacing:-0.2px;-webkit-text-stroke:0.25px #f5f5f5">Lag</div>
<div class="abs" style="left:1556px;top:797.60px;font-size:14px;line-height:18px;color:#f5f5f5;font-weight:normal;white-space:nowrap;-webkit-text-stroke:0.25px #f5f5f5">:</div>
<div class="abs" style="left:1562px;top:797.60px;font-size:14px;line-height:18px;color:#f5f5f5;font-weight:normal;white-space:nowrap;letter-spacing:-0.05px;-webkit-text-stroke:0.25px #f5f5f5">1 day</div>
</body></html>
